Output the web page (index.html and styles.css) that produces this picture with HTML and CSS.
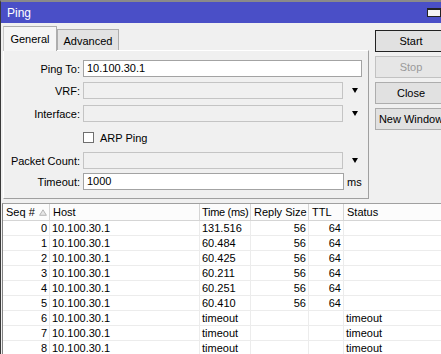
FILE: index.html
```html
<!DOCTYPE html>
<html>
<head>
<meta charset="utf-8">
<title>Ping</title>
<link rel="stylesheet" href="styles.css">
</head>
<body>
<div class="window">
  <div class="titlebar"><span class="title">Ping</span><span class="winbtn"></span></div>
  <div class="content">
    <div class="upper">
      <div class="tabctl">
        <div class="tabs">
          <div class="tab active">General</div>
          <div class="tab">Advanced</div>
        </div>
        <div class="panel">
          <div class="row r1">
            <span class="lbl">Ping To:</span>
            <div class="field"><div class="input">10.100.30.1</div></div>
          </div>
          <div class="row r2">
            <span class="lbl">VRF:</span>
            <div class="field"><div class="input disabled"></div><span class="drop"><span class="tri"></span></span></div>
          </div>
          <div class="row r3">
            <span class="lbl">Interface:</span>
            <div class="field"><div class="input disabled"></div><span class="drop"><span class="tri"></span></span></div>
          </div>
          <div class="row r4">
            <span class="lbl"></span>
            <div class="field"><span class="check"></span><span class="checklbl">ARP Ping</span></div>
          </div>
          <div class="row r5">
            <span class="lbl">Packet Count:</span>
            <div class="field"><div class="input disabled"></div><span class="drop"><span class="tri"></span></span></div>
          </div>
          <div class="row r6">
            <span class="lbl">Timeout:</span>
            <div class="field"><div class="input">1000</div><span class="unit">ms</span></div>
          </div>
        </div>
      </div>
      <div class="buttons">
        <div class="btn default">Start</div>
        <div class="btn disabled">Stop</div>
        <div class="btn">Close</div>
        <div class="btn">New Window</div>
      </div>
    </div>
    <div class="grid">
      <div class="hd">Seq #<svg class="sort" width="8" height="7" viewBox="0 0 8 7"><polygon points="4,0.8 7.4,6.3 0.6,6.3" fill="#e6e6e6" stroke="#b4b4b4" stroke-width="1"/></svg></div>
      <div class="hd">Host</div>
      <div class="hd tight">Time (ms)</div>
      <div class="hd">Reply Size</div>
      <div class="hd">TTL</div>
      <div class="hd last">Status</div>

      <div class="c r">0</div><div class="c">10.100.30.1</div><div class="c">131.516</div><div class="c r">56</div><div class="c r">64</div><div class="c last"></div>
      <div class="c r">1</div><div class="c">10.100.30.1</div><div class="c">60.484</div><div class="c r">56</div><div class="c r">64</div><div class="c last"></div>
      <div class="c r">2</div><div class="c">10.100.30.1</div><div class="c">60.425</div><div class="c r">56</div><div class="c r">64</div><div class="c last"></div>
      <div class="c r">3</div><div class="c">10.100.30.1</div><div class="c">60.211</div><div class="c r">56</div><div class="c r">64</div><div class="c last"></div>
      <div class="c r">4</div><div class="c">10.100.30.1</div><div class="c">60.251</div><div class="c r">56</div><div class="c r">64</div><div class="c last"></div>
      <div class="c r">5</div><div class="c">10.100.30.1</div><div class="c">60.410</div><div class="c r">56</div><div class="c r">64</div><div class="c last"></div>
      <div class="c r">6</div><div class="c">10.100.30.1</div><div class="c">timeout</div><div class="c r"></div><div class="c r"></div><div class="c last">timeout</div>
      <div class="c r">7</div><div class="c">10.100.30.1</div><div class="c">timeout</div><div class="c r"></div><div class="c r"></div><div class="c last">timeout</div>
      <div class="c r">8</div><div class="c">10.100.30.1</div><div class="c">timeout</div><div class="c r"></div><div class="c r"></div><div class="c last">timeout</div>
    </div>
  </div>
</div>
</body>
</html>
```

FILE: styles.css
```css
* { box-sizing: border-box; }
html, body {
  margin: 0;
  padding: 0;
  overflow: hidden;
}
body {
  width: 441px;
  height: 354px;
  background: #f0f0f0;
  font-family: "Liberation Sans", Arial, sans-serif;
  font-size: 11px;
  color: #000;
}
.window {
  width: 470px;
  height: 354px;
  border-top: 2px solid #8a8a8a;
  border-left: 1px solid #3a3a3a;
  background: #f0f0f0;
  display: flex;
  flex-direction: column;
  overflow: hidden;
}
.titlebar {
  flex: 0 0 21px;
  background: #4a4fc7;
  color: #fff;
  display: flex;
  align-items: center;
  padding-left: 6px;
  font-size: 12px;
}
.winbtn {
  margin-left: auto;
  margin-right: 29px;
  width: 14px;
  height: 9px;
  background: #f4f4f4;
  border: 1px solid #222;
  border-top-width: 2px;
}
.content {
  padding: 3px 0 0 2px;
  display: flex;
  flex-direction: column;
}
.upper {
  display: flex;
  gap: 6px;
}
.tabctl {
  width: 366px;
  display: flex;
  flex-direction: column;
}
.tabs {
  height: 24px;
  display: flex;
  align-items: flex-end;
}
.tab {
  height: 21px;
  width: 62px;
  display: flex;
  align-items: center;
  justify-content: center;
  background: #e3e3e3;
  border: 1px solid #adadad;
  border-bottom: none;
  padding-top: 1px;
}
.tab.active {
  width: 54px;
  height: 25px;
  margin-bottom: -1px;
  background: #f5f5f5;
  border-color: #adadad;
  border-left-color: #c9c9c9;
  position: relative;
  z-index: 1;
  padding-top: 0;
  padding-bottom: 1px;
}
.panel {
  height: 149px;
  border: 1px solid;
  border-color: #ffffff #a0a0a0 #a0a0a0 #ffffff;
  padding-top: 9px;
  display: flex;
  flex-direction: column;
}
.row {
  display: grid;
  grid-template-columns: 76px 279px;
  column-gap: 3px;
  height: 17px;
  align-items: center;
}
.r2 { margin-top: 5px; }
.r3 { margin-top: 6px; }
.r4 { margin-top: 7px; }
.r5 { margin-top: 6px; }
.r6 { margin-top: 4px; }
.lbl {
  text-align: right;
  white-space: nowrap;
}
.field {
  display: flex;
  align-items: center;
  height: 17px;
}
.input {
  flex: 1;
  height: 17px;
  background: #fff;
  border: 1px solid #a3a3a3;
  padding-left: 3px;
  line-height: 15px;
}
.input.disabled {
  background: #f0f0f0;
  border-color: #c4c4c4;
}
.drop {
  width: 19px;
  height: 17px;
  display: flex;
  align-items: center;
  padding-left: 9px;
}
.tri {
  width: 0;
  height: 0;
  border-left: 3.5px solid transparent;
  border-right: 3.5px solid transparent;
  border-top: 5px solid #000;
}
.unit {
  width: 18px;
  padding-left: 3px;
}
.check {
  width: 11px;
  height: 11px;
  background: #fff;
  border: 1px solid #6f6f6f;
}
.checklbl {
  margin-left: 6px;
}
.buttons {
  width: 72px;
  margin-top: 4px;
  display: flex;
  flex-direction: column;
  gap: 4px;
}
.btn {
  height: 22px;
  background: #e1e1e1;
  border: 1px solid #adadad;
  display: flex;
  align-items: center;
  justify-content: center;
  white-space: nowrap;
}
.btn.default {
  border-color: #222;
}
.btn.disabled {
  color: #9a9a9a;
  background: #e6e6e6;
  border-color: #c2c2c2;
}
.grid {
  margin-top: 4px;
  margin-left: -1px;
  display: grid;
  grid-template-columns: 47px 150px 51px 58px 35px 140px;
  border-top: 1px solid #a0a0a0;
  border-left: 1px solid #828282;
  background: #fff;
}
.hd {
  height: 17px;
  background: #fcfcfc;
  border-right: 1px solid #d5d5d5;
  border-bottom: 1px solid #d5d5d5;
  padding: 0 2px 0 3px;
  line-height: 16px;
  white-space: nowrap;
  overflow: hidden;
  display: flex;
  align-items: center;
}
.hd.tight {
  padding: 0 0 0 2px;
  letter-spacing: -0.3px;
}
.sort {
  margin-left: 4px;
}
.c {
  height: 15px;
  border-right: 1px solid #ececec;
  border-bottom: 1px solid #ececec;
  padding: 0 2px 0 2px;
  line-height: 14px;
  white-space: nowrap;
  overflow: hidden;
}
.c.r {
  text-align: right;
}
.last {
  border-right: none;
}
```
